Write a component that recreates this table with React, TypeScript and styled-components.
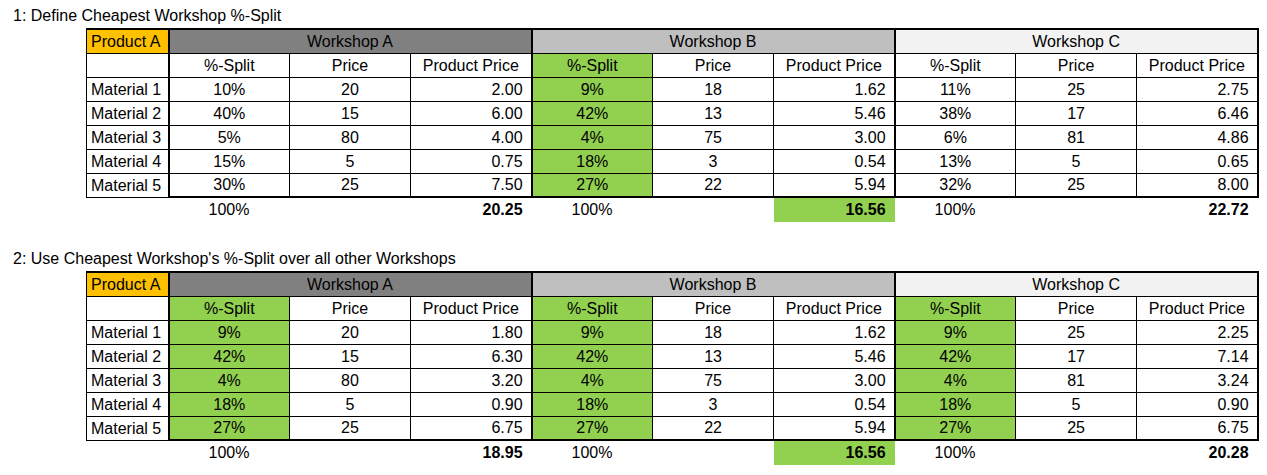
import React from "react";
import styled, { createGlobalStyle } from "styled-components";

const GREEN = "#92d050";
const ORANGE = "#ffc000";

const GlobalStyle = createGlobalStyle`
  html, body { margin: 0; padding: 0; background: #ffffff; }
  body {
    font-family: "Liberation Sans", Arial, sans-serif;
    font-size: 16px;
    color: #000000;
  }
`;

const Page = styled.div`
  display: flex;
  flex-direction: column;
  gap: 21px;
  width: 1267px;
  padding-left: 13px;
  box-sizing: border-box;
`;

const Section = styled.section`
  display: flex;
  flex-direction: column;
`;

const Title = styled.div`
  height: 28px;
  padding-top: 6px;
  box-sizing: border-box;
  line-height: 20px;
  white-space: nowrap;
`;

const Sheet = styled.table`
  margin-left: 73px;
  border-collapse: collapse;
  table-layout: fixed;
  width: 1171px;
`;

const Row = styled.tr`
  height: 24px;
`;

const TotalRow = styled.tr`
  height: 25px;
`;

type Align = "left" | "center" | "right";

interface CellProps {
  $align: Align;
  $bg?: string;
  $t?: boolean;
  $b?: boolean;
  $l?: boolean;
  $r?: boolean;
}

const Cell = styled.td<CellProps>`
  border: 1px solid #000;
  border-top-width: ${(p) => (p.$t ? "2px" : "1px")};
  border-bottom-width: ${(p) => (p.$b ? "2px" : "1px")};
  border-left-width: ${(p) => (p.$l ? "2px" : "1px")};
  border-right-width: ${(p) => (p.$r ? "2px" : "1px")};
  background: ${(p) => p.$bg ?? "#ffffff"};
  text-align: ${(p) => p.$align};
  padding: 0 ${(p) => (p.$align === "right" ? "8px" : "0")} 1px
    ${(p) => (p.$align === "left" ? "4px" : "0")};
  vertical-align: bottom;
  line-height: 20px;
  white-space: nowrap;
  overflow: hidden;
`;

const TotalCell = styled.td<{ $align: Align; $bg?: string; $bold?: boolean }>`
  border: none;
  background: ${(p) => p.$bg ?? "transparent"};
  text-align: ${(p) => p.$align};
  font-weight: ${(p) => (p.$bold ? 700 : 400)};
  padding: 0 ${(p) => (p.$align === "right" ? "9px" : "0")} 2px 0;
  vertical-align: bottom;
  line-height: 20px;
  white-space: nowrap;
`;

interface Workshop {
  name: string;
  headerBg: string;
  split: number[];
  price: number[];
  splitGreen: boolean;
  totalGreen: boolean;
}

interface TableSpec {
  title: string;
  workshops: Workshop[];
}

const cheapestSplit = [9, 42, 4, 18, 27];

const tables: TableSpec[] = [
  {
    title: "1: Define Cheapest Workshop %-Split",
    workshops: [
      { name: "Workshop A", headerBg: "#808080", split: [10, 40, 5, 15, 30], price: [20, 15, 80, 5, 25], splitGreen: false, totalGreen: false },
      { name: "Workshop B", headerBg: "#bfbfbf", split: cheapestSplit, price: [18, 13, 75, 3, 22], splitGreen: true, totalGreen: true },
      { name: "Workshop C", headerBg: "#f2f2f2", split: [11, 38, 6, 13, 32], price: [25, 17, 81, 5, 25], splitGreen: false, totalGreen: false },
    ],
  },
  {
    title: "2: Use Cheapest Workshop's %-Split over all other Workshops",
    workshops: [
      { name: "Workshop A", headerBg: "#808080", split: cheapestSplit, price: [20, 15, 80, 5, 25], splitGreen: true, totalGreen: false },
      { name: "Workshop B", headerBg: "#bfbfbf", split: cheapestSplit, price: [18, 13, 75, 3, 22], splitGreen: true, totalGreen: true },
      { name: "Workshop C", headerBg: "#f2f2f2", split: cheapestSplit, price: [25, 17, 81, 5, 25], splitGreen: true, totalGreen: false },
    ],
  },
];

const materials = ["Material 1", "Material 2", "Material 3", "Material 4", "Material 5"];

const money = (cents: number) => (cents / 100).toFixed(2);

const SplitTable: React.FC<{ spec: TableSpec }> = ({ spec }) => {
  const last = materials.length - 1;
  return (
    <Section>
      <Title>{spec.title}</Title>
      <Sheet>
        <colgroup>
          <col style={{ width: 82 }} />
          {spec.workshops.map((w) => (
            <React.Fragment key={w.name}>
              <col style={{ width: 121 }} />
              <col style={{ width: 121 }} />
              <col style={{ width: 121 }} />
            </React.Fragment>
          ))}
        </colgroup>
        <tbody>
          <Row>
            <Cell $align="left" $bg={ORANGE} $t>
              Product A
            </Cell>
            {spec.workshops.map((w) => (
              <Cell key={w.name} colSpan={3} $align="center" $bg={w.headerBg} $t $l $r>
                {w.name}
              </Cell>
            ))}
          </Row>
          <Row>
            <Cell $align="left" />
            {spec.workshops.map((w) => (
              <React.Fragment key={w.name}>
                <Cell $align="center" $l $bg={w.splitGreen ? GREEN : undefined}>
                  %-Split
                </Cell>
                <Cell $align="center">Price</Cell>
                <Cell $align="center" $r>
                  Product Price
                </Cell>
              </React.Fragment>
            ))}
          </Row>
          {materials.map((m, i) => (
            <Row key={m}>
              <Cell $align="left">{m}</Cell>
              {spec.workshops.map((w) => (
                <React.Fragment key={w.name}>
                  <Cell $align="center" $l $b={i === last} $bg={w.splitGreen ? GREEN : undefined}>
                    {w.split[i]}%
                  </Cell>
                  <Cell $align="center" $b={i === last}>
                    {w.price[i]}
                  </Cell>
                  <Cell $align="right" $r $b={i === last}>
                    {money(w.split[i] * w.price[i])}
                  </Cell>
                </React.Fragment>
              ))}
            </Row>
          ))}
        </tbody>
        <tfoot>
          <TotalRow>
            <TotalCell $align="left" />
            {spec.workshops.map((w) => {
              const sumSplit = w.split.reduce((a, b) => a + b, 0);
              const sum = w.split.reduce((a, s, i) => a + s * w.price[i], 0);
              return (
                <React.Fragment key={w.name}>
                  <TotalCell $align="center">{sumSplit}%</TotalCell>
                  <TotalCell $align="center" />
                  <TotalCell $align="right" $bold $bg={w.totalGreen ? GREEN : undefined}>
                    {money(sum)}
                  </TotalCell>
                </React.Fragment>
              );
            })}
          </TotalRow>
        </tfoot>
      </Sheet>
    </Section>
  );
};

export default function App() {
  return (
    <>
      <GlobalStyle />
      <Page>
        {tables.map((t) => (
          <SplitTable key={t.title} spec={t} />
        ))}
      </Page>
    </>
  );
}
